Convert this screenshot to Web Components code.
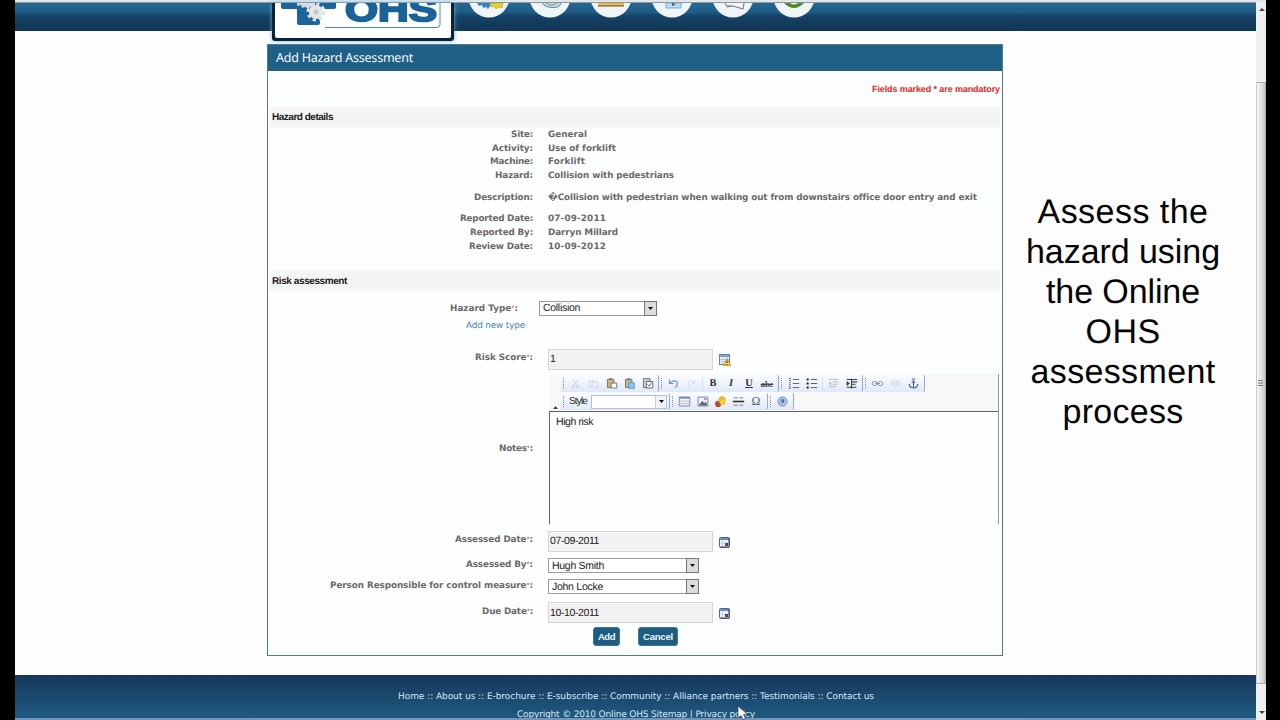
<!DOCTYPE html>
<html lang="en">
<head>
<meta charset="utf-8">
<title>Add Hazard Assessment</title>
<style>
  html, body { margin: 0; height: 100%; background: #000; overflow: hidden; }
  body { font-family: "DejaVu Sans", sans-serif; text-rendering: geometricPrecision; }
</style>
</head>
<body>
<app-window>
  <site-header slot="header"></site-header>
  <form-panel heading="Add Hazard Assessment">
    <section-bar width="61">Hazard details</section-bar>
    <form-row height="13.5" label="Site:" lw="22"><fit-text width="39">General</fit-text></form-row>
    <form-row height="13.5" label="Activity:" lw="41"><fit-text width="68">Use of forklift</fit-text></form-row>
    <form-row height="13.5" label="Machine:" lw="43"><fit-text width="37">Forklift</fit-text></form-row>
    <form-row height="13.5" label="Hazard:" lw="38"><fit-text width="126">Collision with pedestrians</fit-text></form-row>
    <form-row height="30" label="Description:" lw="59"><fit-text width="428">&#xFFFD;Collision with pedestrian when walking out from downstairs office door entry and exit</fit-text></form-row>
    <form-row height="13.5" label="Reported Date:" lw="73"><fit-text width="58">07-09-2011</fit-text></form-row>
    <form-row height="13.5" label="Reported By:" lw="63"><fit-text width="70">Darryn Millard</fit-text></form-row>
    <form-row height="31" label="Review Date:" lw="64" lift="17"><fit-text width="58">10-09-2012</fit-text></form-row>
    <section-bar width="75">Risk assessment</section-bar>
    <form-row class="type" height="32" label="Hazard Type" lw="68" required="#e33"><select-box width="118" tw="37">Collision</select-box></form-row>
    <link-row></link-row>
    <form-row height="30" label="Risk Score" lw="58" required lift="4"><text-field tw="5">1</text-field><field-icon kind="score"></field-icon></form-row>
    <form-row height="150" label="Notes" lw="34" required lift="2"><rich-editor>High risk</rich-editor></form-row>
    <form-row height="34" label="Assessed Date" lw="78" required lift="3"><text-field tw="49">07-09-2011</text-field><field-icon></field-icon></form-row>
    <form-row height="13" label="Assessed By" lw="67" required lift="2"><select-box width="151" tw="52">Hugh Smith</select-box></form-row>
    <form-row height="31" label="Person Responsible for control measure" lw="203" required lift="2"><select-box width="151" tw="51">John Locke</select-box></form-row>
    <form-row height="21" label="Due Date" lw="51" required lift="3"><text-field tw="49">10-10-2011</text-field><field-icon></field-icon></form-row>
    <button-bar></button-bar>
  </form-panel>
  <side-caption slot="caption">
    <fit-text width="171">Assess the</fit-text>
    <fit-text width="194">hazard using</fit-text>
    <fit-text width="154">the Online</fit-text>
    <fit-text width="75">OHS</fit-text>
    <fit-text width="185">assessment</fit-text>
    <fit-text width="121">process</fit-text>
  </side-caption>
  <site-footer slot="footer"></site-footer>
</app-window>

<script>
// Base class: subclasses only return their markup
class BaseElement extends HTMLElement {
  constructor() {
    super();
    this.attachShadow({ mode: 'open' });
  }

  connectedCallback() {
    this.shadowRoot.innerHTML = this.template();
  }

  attr(name, fallback = '') {
    return this.getAttribute(name) ?? fallback;
  }
}

class AppWindow extends BaseElement {
  template() {
    return `
      <style>
        :host {
          display: grid;
          grid-template-columns: 1241px 10px;
          width: 1251px;
          height: 720px;
          margin-left: 15px;
          background: #fdfdfe;
          position: relative;
        }
        .page { display: flex; flex-direction: column; min-width: 0; }
        .edge { height: 3px; background: #e2e6e8; border-bottom: 1px solid #8b9ba5; box-sizing: border-box; }
        main {
          display: grid;
          grid-template-columns: 736px 1fr;
          height: 644px;
          padding-left: 252px;
          box-sizing: border-box;
          align-items: start;
        }
        .cursor { position: absolute; left: 722px; top: 706px; }
      </style>
      <div class="page">
        <div class="edge"></div>
        <slot name="header"></slot>
        <main><slot></slot><slot name="caption"></slot></main>
        <slot name="footer"></slot>
      </div>
      <scroll-bar></scroll-bar>
      <svg class="cursor" width="12" height="14" viewBox="0 0 12 14">
        <path d="M1 0v12l3-2.500 2 4 2.500-1-2-4h4z" fill="#fff" stroke="#26435c" stroke-width=".7"/>
      </svg>
    `;
  }
}

class ScrollBar extends BaseElement {
  template() {
    return `
      <style>
        :host { display: flex; flex-direction: column; align-items: stretch; background: #f0eff0; height: 720px; }
        svg { display: block; margin: 0 0 0 2px; }
        .up { height: 82px; border-top: 2px solid #e0e5e8; box-sizing: border-box; }
        .thumb {
          height: 602px;
          box-sizing: border-box;
          border: 1px solid #aaa;
          border-left-color: #ccc;
          border-radius: 1px;
          background: linear-gradient(90deg, #f5f5f5, #e4e4e4 45%, #c9c9c9);
          display: flex;
          align-items: center;
          justify-content: center;
        }
        .thumb svg { margin: 0; }
        .down { height: 36px; display: flex; align-items: end; padding-bottom: 4px; box-sizing: border-box; }
      </style>
      <div class="up"><svg width="8" height="12"><path d="M1 9l3-3 3 3z" fill="#444"/></svg></div>
      <div class="thumb"><svg width="6" height="8"><path d="M0 1.500h5M0 4h5M0 6.500h5" stroke="#777"/></svg></div>
      <div class="down"><svg width="8" height="6"><path d="M1 1l3 3 3-3z" fill="#444"/></svg></div>
    `;
  }
}

class SiteHeader extends BaseElement {
  template() {
    // bottoms of the round menu buttons; the rest is scrolled away
    const art = [
      '<path d="M8 0l2 3 3-1 1 3 3-1 2 2 2-3V0z" fill="#2e86c8"/><path d="M21 0l1 4 3-1 2 3 3-2 3 1 1-5z" fill="#e8d420" stroke="#a8a020" stroke-width=".6"/>',
      '<path d="M12 0q2 4 10 4.500T31 0" fill="#c3dce2" stroke="#5f8b99"/><path d="M16 0q5 4 11 0" fill="none" stroke="#7499a2"/>',
      '<path d="M7 0h26v3H7z" fill="#e8bd45"/><path d="M7 3h26" stroke="#554d38" fill="none"/>',
      '<path d="M14 0h15v5H14z" fill="#b9daf3" stroke="#79afe0"/><path d="M20 0l4 1-4 2z" fill="#315a87"/>',
      '<path d="M12 0l2 4 6-1 10 3 1-6" fill="#f3f3f3" stroke="#555" stroke-width=".8"/><path d="M14 2l6 1" stroke="#aaa"/>',
      '<path d="M10 0q10 10 20 0h-6q-4 3-8 0z" fill="#4c8b24"/>',
    ];
    return `
      <style>
        :host {
          display: block;
          position: relative;
          height: 28px;
          flex: none;
          background: linear-gradient(#266791 0, #1f5c86 9px, #164368 13px, #12395a 22px, #103757 100%);
        }
        nav { display: flex; gap: 21px; padding-left: 454px; }
        nav svg { display: block; width: 40px; }
        /* the logo plate hangs over the lower edge of the header */
        .logo { position: absolute; left: 253px; top: 0; filter: drop-shadow(0 0 2px #62b0df); }
      </style>
      <nav>
        ${art.map((shape) => `
          <svg width="40" height="15"><circle cx="20" cy="-6" r="20.500" fill="#f0f4f7"/>${shape}</svg>
        `).join('')}
      </nav>
      <svg class="logo" width="190" height="40" viewBox="0 0 190 40">
        <path d="M4 0H186V35q0 3-3 3H7q-3 0-3-3z" fill="#0c2334"/>
        <path d="M7 0H183V33q0 2-2 2H9q-2 0-2-2z" fill="#fff"/>
        <path d="M57 24.500H169q3 0 3-3V0" fill="none" stroke="#4b8dac"/>
        <path d="M13 0H68V4q0 2-2 2H52V20q0 2-2 2H31q-2 0-2-2V6H15q-2 0-2-2z" fill="#1b659b"/>
        <path d="M29 0h18v4l-4-1-2 3-4-2-3 1-1-3-4 1z" fill="#d8d8d6"/>
        <g fill="#e5e7e8">
          <circle cx="48" cy="9" r="7"/>
          <circle cx="48" cy="9" r="8" fill="none" stroke="#dfe2e4" stroke-width="3" stroke-dasharray="3.200 3.080"/>
        </g>
        <circle cx="48" cy="9" r="2.500" fill="#c0c7cc"/>
        <text x="77" y="17.500" font-family="Liberation Sans" font-weight="700" font-size="33" textLength="92" lengthAdjust="spacingAndGlyphs" fill="#1b6299" stroke="#1b6299" stroke-width="2">OHS</text>
      </svg>
    `;
  }
}

class FormPanel extends BaseElement {
  template() {
    return `
      <style>
        :host {
          display: flex;
          flex-direction: column;
          box-sizing: border-box;
          height: 612px;
          margin-top: 13px;
          border: 1px solid #4f7b90;
          background: #fdfefe;
        }
        h1 {
          margin: 0;
          height: 26px;
          display: flex;
          align-items: center;
          padding: 0 0 2px 8px;
          box-sizing: border-box;
          background: #205f86;
          color: #f3f9fc;
          font: 400 12.5px "Noto Sans", sans-serif;
          flex: none;
        }
        .note {
          height: 35px;
          display: flex;
          align-items: center;
          justify-content: flex-end;
          padding: 1px 2px 0 0;
          box-sizing: border-box;
          color: #e8251f;
          font: 700 9px "Liberation Sans", sans-serif;
          flex: none;
        }
      </style>
      <h1><fit-text width="137">${this.attr('heading')}</fit-text></h1>
      <div class="note"><fit-text width="128">Fields marked * are mandatory</fit-text></div>
      <slot></slot>
    `;
  }
}

class SectionBar extends BaseElement {
  template() {
    return `
      <style>
        :host {
          display: flex;
          align-items: center;
          height: 22px;
          flex: none;
          margin: 0 2px;
          padding-left: 2px;
          background: linear-gradient(#f6f6f6, #f3f3f3 80%, #fafafa);
          font: 700 10px "Liberation Sans", sans-serif;
          color: #1c1c1c;
        }
      </style>
      <fit-text width="${this.attr('width')}"><slot></slot></fit-text>
    `;
  }
}

class FormRow extends BaseElement {
  template() {
    const required = this.hasAttribute('required');
    const star = required ? `<i>*</i>:` : '';
    return `
      <style>
        :host {
          display: grid;
          grid-template-columns: 265px 1fr;
          column-gap: 15px;
          align-items: center;
          height: ${this.attr('height')}px;
          flex: none;
          font-size: 8.8px;
          line-height: 1;
          font-weight: 700;
          color: #6a6a6a;
        }
        :host(.type) { grid-template-columns: 250px 1fr; column-gap: 21px; }
        .label { display: flex; justify-content: flex-end; padding: 2px 0 ${this.attr('lift', 0)}px; }
        .value { display: flex; align-items: center; padding: ${required ? '0' : `2px 0 ${this.attr('lift', 0)}px`}; }
        i { font: 400 8px/1 "Liberation Sans", sans-serif; color: ${this.attr('required') || '#8d6262'}; }
      </style>
      <div class="label"><fit-text width="${this.attr('lw')}">${this.attr('label')}${star}</fit-text></div>
      <div class="value"><slot></slot></div>
    `;
  }
}

class LinkRow extends BaseElement {
  template() {
    return `
      <style>
        :host { display: flex; height: 20px; padding: 0 0 0 198px; flex: none; font-size: 8.8px; line-height: 1; }
        a { color: #4385ad; text-decoration: none; margin-top: -2px; }
      </style>
      <a><fit-text width="59">Add new type</fit-text></a>
    `;
  }
}

class SelectBox extends BaseElement {
  template() {
    return `
      <style>
        :host {
          display: flex;
          align-items: center;
          justify-content: space-between;
          box-sizing: border-box;
          width: ${this.attr('width')}px;
          height: 15px;
          flex: none;
          border: 1px solid #9a9a9a;
          background: #fff;
          padding-left: 3px;
          font: 400 10.5px "Liberation Sans", sans-serif;
          color: #222;
        }
        .arrow {
          box-sizing: border-box;
          width: 13px;
          height: 15px;
          margin: -1px;
          border: 1px solid #777;
          background: #dcdcdc;
          display: flex;
          align-items: center;
          justify-content: center;
        }
      </style>
      <fit-text width="${this.attr('tw')}"><slot></slot></fit-text>
      <span class="arrow"><svg width="5" height="3"><path d="M0 0h5L2.500 3z" fill="#111"/></svg></span>
    `;
  }
}

class TextField extends BaseElement {
  template() {
    return `
      <style>
        :host {
          display: flex;
          align-items: center;
          box-sizing: border-box;
          width: 165px;
          height: 21px;
          flex: none;
          border: 1px solid #d5d5d5;
          background: #f2f2f2;
          padding-left: 1px;
          font: 400 10.5px "Liberation Sans", sans-serif;
          color: #222;
        }
      </style>
      <fit-text width="${this.attr('tw')}"><slot></slot></fit-text>
    `;
  }
}

class FieldIcon extends BaseElement {
  template() {
    const score = this.attr('kind') === 'score';
    return `
      <style>
        :host { display: block; margin: 2px 0 0 6px; }
        svg { display: block; }
      </style>
      ${score ? `
        <svg width="12" height="12" viewBox="0 0 12 12">
          <rect x=".5" y=".5" width="10" height="10" fill="#eef5fb" stroke="#5f86a8"/>
          <path d="M1 2h9" stroke="#78a4cd" stroke-width="2"/>
          <path d="M1 5.500h9M1 8h9M4 3v7M7 3v7" stroke="#a9c3da" stroke-width=".8"/>
          <path d="M8 4.500l4 7H4z" fill="#f4d23c" stroke="#b58a1e" stroke-width=".7"/>
          <path d="M8 6.500v2.500M8 10v1" stroke="#43370d"/>
        </svg>
      ` : `
        <svg width="11" height="11" viewBox="0 0 11 11">
          <rect x=".5" y=".5" width="10" height="10" rx="1" fill="#eef1f7" stroke="#54647e"/>
          <path d="M1 2h9" stroke="#6f8cb8" stroke-width="2"/>
          <path d="M3.500 3v7M1 6h9" stroke="#c3cbd9" stroke-width=".8"/>
          <path d="M10 1v9H1" fill="none" stroke="#42485a"/>
          <rect x="6" y="6" width="3" height="3" fill="#6b3f4e"/>
        </svg>
      `}
    `;
  }
}

// 16x16 drawings for the editor buttons
const TOOL_ICONS = {
  cut: '<g opacity=".35" stroke="#7b8aa5" fill="none"><path d="M5 3l5 8M11 3l-5 8"/><circle cx="5" cy="12" r="1.500"/><circle cx="11" cy="12" r="1.500"/></g>',
  copy: '<g opacity=".35" fill="#eef" stroke="#8291b0"><path d="M2.500 4.500h6v7h-6z"/><path d="M6.500 6.500h7v6h-7z"/></g>',
  paste: '<path d="M3 3h8v10H3z" fill="#c9b67a" stroke="#68664f"/><path d="M5 1.500h4v2H5z" fill="#777"/><path d="M7.500 7.500h7v6h-7z" fill="#fff" stroke="#555f73"/>',
  pasteText: '<path d="M3 3h8v10H3z" fill="#b9b69a" stroke="#68664f"/><path d="M5 1.500h4v2H5z" fill="#777"/><path d="M7 7h7v7H7z" fill="#8ec3ee" stroke="#5b91c6"/>',
  pasteWord: '<path d="M3 2h8v11H3z" fill="#d7d2c1" stroke="#555b68"/><path d="M6.500 5.500h8v8h-8z" fill="#f2f5fb" stroke="#465063"/><path d="M8 9l2 2 3-4" fill="none" stroke="#345"/>',
  undo: '<path d="M3 3v5h5M3 8q5-5 9-2 2 4-2 7" fill="none" stroke="#7393c8" stroke-width="1.500"/>',
  redo: '<path d="M12 4v4H8M12 8q-4-5-8-2-1 3 2 6" fill="none" stroke="#b9c4d8" opacity=".6"/>',
  ol: '<path d="M7 3h8M7 8h8M7 13h8" stroke="#444"/><path d="M3.500 1v4M3.500 6v4M3.500 11v4" stroke="#444" stroke-width="1.500" stroke-dasharray="1.500 .8"/>',
  ul: '<path d="M7 3h8M7 8h8M7 13h8" stroke="#444"/><path d="M2 3h2.500M2 8h2.500M2 13h2.500" stroke="#222" stroke-width="2.500"/>',
  outdent: '<path d="M2 3h12M7 6h7M7 9h6M2 12h9" stroke="#aab0bb"/><path d="M5 5.500L2 8l3 2.500z" fill="#aab0bb"/>',
  indent: '<path d="M2 3h13M8 6h7M8 9h5M2 12.500h12M8 2v12" stroke="#3d4248" stroke-width="1.300"/><path d="M2 5l4 3-4 3z" fill="#333"/>',
  link: '<g fill="none" stroke="#8a93a0" stroke-width="1.200"><rect x="1.500" y="5.500" width="6" height="5" rx="2.500"/><rect x="8.500" y="5.500" width="6" height="5" rx="2.500"/><path d="M5 8h6"/></g>',
  unlink: '<g fill="#dfe3ea" stroke="#c5c9d2" opacity=".6"><circle cx="8" cy="8" r="4"/><rect x="2" y="6" width="5" height="4" rx="2"/><rect x="9" y="6" width="5" height="4" rx="2"/></g>',
  anchor: '<circle cx="8" cy="3" r="1.400" fill="none" stroke="#4b607f"/><path d="M8 4.500v9M5.500 6.500h5M2.500 8.500q1 5 5.500 5t5.500-5" fill="none" stroke="#4b607f" stroke-width="1.400"/>',
  table: '<path d="M1.500 2.500h13v11h-13z" fill="#f3f6fb" stroke="#68768e"/><path d="M2 3.500h12" stroke="#7187ad" stroke-width="2"/><path d="M2 7.500h12M2 10.500h12" stroke="#a9b4c6"/>',
  image: '<path d="M2.500 2.500h12v11h-12z" fill="#eef" stroke="#6d7685"/><path d="M3 13l5-6 2 3 2-2 2 5z" fill="#5b6574"/><path d="M10 4h3v2h-3z" fill="#8790a0"/>',
  smiley: '<circle cx="5" cy="11" r="3.800" fill="#b84a31"/><circle cx="10" cy="6" r="4.500" fill="#e9b832"/><circle cx="11" cy="9" r="3.500" fill="#f0cf3e"/>',
  rule: '<path d="M2 3.500h5M9 3.500h5M2 12.500h5M9 12.500h5" stroke="#666"/><path d="M1 8h14" stroke="#333" stroke-width="2"/>',
  help: '<circle cx="8" cy="8" r="6" fill="#86a5d5" stroke="#a9c0e4"/><circle cx="8" cy="8" r="3.500" fill="none" stroke="#e7f0fb"/><path d="M6.500 7q1.500-3 3 0L8 9.500" fill="none" stroke="#31588f" stroke-width="1.300"/>',
};

class ToolGroup extends BaseElement {
  template() {
    const letters = { bold: '<b>B</b>', italic: '<em>I</em>', underline: '<u>U</u>', strike: '<s>abc</s>', omega: '<span class="om">Ω</span>' };
    const tools = this.attr('tools').split(' ').map((name) => {
      if (name === '|') return '<span class="sep"></span>';
      const icon = letters[name] || `<svg width="13" height="13" viewBox="0 0 16 16">${TOOL_ICONS[name] || ''}</svg>`;
      return name ? `<span class="tool">${icon}</span>` : '';
    }).join('');
    return `
      <style>
        :host {
          display: flex;
          align-items: center;
          height: 17px;
          box-sizing: border-box;
          border-right: 1px solid #8fa9dc;
          border-radius: 0 2px 2px 0;
          padding-right: 2px;
          background: linear-gradient(#fafcff, #edf2fc 55%, #dfe8f8);
        }
        .handle { width: 1px; height: 11px; margin: 0 2px; border-left: 1px dotted #88a; box-sizing: border-box; }
        .tool { width: 18px; height: 16px; display: flex; align-items: center; justify-content: center; }
        .sep { width: 1px; height: 13px; margin: 0 1px 0 2px; background: #d7deec; }
        svg { display: block; }
        b, em, u { font: 700 10.5px "Liberation Serif", serif; color: #333; }
        em { font-style: italic; }
        s { font: 700 8.5px "Liberation Serif", serif; color: #444; }
        .om { font: 400 12px "Liberation Serif", serif; color: #52617e; }
      </style>
      <span class="handle"></span>${tools}<slot></slot>
    `;
  }
}

class RichEditor extends BaseElement {
  template() {
    return `
      <style>
        :host {
          display: flex;
          flex-direction: column;
          box-sizing: border-box;
          width: 450px;
          height: 150px;
          margin-left: 1px;
          border-right: 1px solid #8f959a;
          font: 400 10px "Liberation Sans", sans-serif;
          color: #222;
        }
        .bars { display: flex; height: 37px; background: #f8f8f9; flex: none; }
        .toggle { width: 12px; display: flex; align-items: flex-end; justify-content: center; }
        .toggle svg { display: block; margin-bottom: 1px; }
        .rows { display: flex; flex-direction: column; gap: 1px; padding-top: 1px; }
        .row { display: flex; }
        .combo {
          display: flex;
          align-items: center;
          justify-content: flex-end;
          width: 76px;
          height: 14px;
          box-sizing: border-box;
          border: 1px solid #b4bfd2;
          background: #fff;
          margin: 0 0 0 4px;
        }
        .combo span { display: flex; align-items: center; justify-content: center; width: 10px; height: 12px; border-left: 1px solid #c6d0e2; background: #eef3fb; }
        .text { flex: 1; box-sizing: border-box; border: 1px solid #5d6163; border-width: 1px 0 0 1px; background: #fefefe; padding: 5px 6px; font-size: 10.5px; line-height: 11px; }
        .style { margin-left: 3px; }
      </style>
      <div class="bars">
        <div class="toggle"><svg width="5" height="4"><path d="M0 3l2.500-3L5 3z" fill="#444"/></svg></div>
        <div class="rows">
          <div class="row">
            <tool-group tools="cut copy paste pasteText pasteWord"></tool-group>
            <tool-group tools="undo redo | bold italic underline strike"></tool-group>
            <tool-group tools="ol ul | outdent indent"></tool-group>
            <tool-group tools="link unlink anchor"></tool-group>
          </div>
          <div class="row">
            <tool-group tools="">
              <fit-text class="style" width="18">Style</fit-text>
              <div class="combo"><span><svg width="5" height="3"><path d="M0 0h5L2.500 3z" fill="#111"/></svg></span></div>
            </tool-group>
            <tool-group tools="table image smiley rule omega"></tool-group>
            <tool-group tools="help"></tool-group>
          </div>
        </div>
      </div>
      <div class="text"><fit-text width="37"><slot></slot></fit-text></div>
    `;
  }
}

class ButtonBar extends BaseElement {
  template() {
    return `
      <style>
        :host { display: flex; gap: 18px; margin: 4px 0 0 325px; }
        button {
          height: 19px;
          box-sizing: border-box;
          border: 1px solid #3f7598;
          border-radius: 3px;
          padding: 0;
          background: #1f5c82;
          color: #f0f7fb;
          font: 700 9.5px "Liberation Sans", sans-serif;
        }
      </style>
      <button style="width: 27px"><fit-text width="17">Add</fit-text></button>
      <button style="width: 40px"><fit-text width="30">Cancel</fit-text></button>
    `;
  }
}

class SideCaption extends BaseElement {
  template() {
    return `
      <style>
        :host {
          display: flex;
          flex-direction: column;
          align-items: center;
          width: 240px;
          padding-top: 161px;
          font: 400 34px/40px "Liberation Sans", sans-serif;
          color: #050505;
        }
      </style>
      <slot></slot>
    `;
  }
}

class SiteFooter extends BaseElement {
  template() {
    return `
      <style>
        :host {
          display: flex;
          flex-direction: column;
          align-items: center;
          height: 45px;
          box-sizing: border-box;
          padding: 15px 0 0 1px;
          overflow: hidden;
          border-bottom: 2px solid #7893b8;
          background: linear-gradient(#17385a, #1b4a70 55%, #205a80);
          color: #d5e6f0;
          font-size: 9px;
          line-height: 14px;
        }
        .copy { margin-top: 4px; line-height: 12px; padding-top: 1px; }
      </style>
      <fit-text width="476">Home :: About us :: E-brochure :: E-subscribe :: Community :: Alliance partners :: Testimonials :: Contact us</fit-text>
      <fit-text class="copy" width="238">Copyright © 2010 Online OHS Sitemap | Privacy policy</fit-text>
    `;
  }
}

// Spreads its text over a set width by adjusting the tracking
class FitText extends BaseElement {
  template() {
    return `
      <style>
        :host { display: inline-block; flex: none; white-space: nowrap; }
        span { display: inline-block; }
      </style>
      <span><slot></slot></span>
    `;
  }

  connectedCallback() {
    super.connectedCallback();
    const span = this.shadowRoot.querySelector('span');
    const slot = this.shadowRoot.querySelector('slot');
    const text = slot.assignedNodes({ flatten: true }).map((n) => n.textContent).join('').trim();
    const extra = Number(this.attr('width')) - span.getBoundingClientRect().width;
    span.style.letterSpacing = `${extra / text.length}px`;
  }
}

customElements.define('app-window', AppWindow);
customElements.define('scroll-bar', ScrollBar);
customElements.define('site-header', SiteHeader);
customElements.define('form-panel', FormPanel);
customElements.define('section-bar', SectionBar);
customElements.define('form-row', FormRow);
customElements.define('link-row', LinkRow);
customElements.define('select-box', SelectBox);
customElements.define('text-field', TextField);
customElements.define('field-icon', FieldIcon);
customElements.define('tool-group', ToolGroup);
customElements.define('rich-editor', RichEditor);
customElements.define('button-bar', ButtonBar);
customElements.define('side-caption', SideCaption);
customElements.define('site-footer', SiteFooter);
// last, so that it measures with every other style in place
customElements.define('fit-text', FitText);
</script>
</body>
</html>
